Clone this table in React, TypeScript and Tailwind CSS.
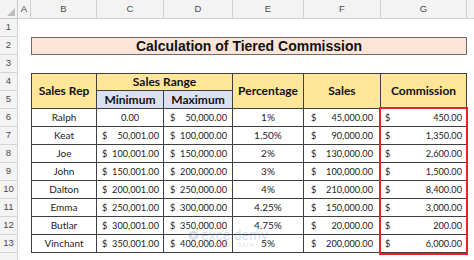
import type { FunctionComponent } from "react";

type Row = {
  name: string;
  min: string | null;
  max: string;
  pct: string;
  sales: string;
  commission: string;
};

const rows: Row[] = [
  { name: "Ralph", min: null, max: "50,000.00", pct: "1%", sales: "45,000.00", commission: "450.00" },
  { name: "Keat", min: "50,001.00", max: "100,000.00", pct: "1.50%", sales: "90,000.00", commission: "1,350.00" },
  { name: "Joe", min: "100,001.00", max: "150,000.00", pct: "2%", sales: "130,000.00", commission: "2,600.00" },
  { name: "John", min: "150,001.00", max: "200,000.00", pct: "3%", sales: "100,000.00", commission: "1,500.00" },
  { name: "Dalton", min: "200,001.00", max: "250,000.00", pct: "4%", sales: "210,000.00", commission: "8,400.00" },
  { name: "Emma", min: "250,001.00", max: "300,000.00", pct: "4.25%", sales: "150,000.00", commission: "3,000.00" },
  { name: "Butlar", min: "300,001.00", max: "350,000.00", pct: "4.75%", sales: "20,000.00", commission: "200.00" },
  { name: "Vinchant", min: "350,001.00", max: "400,000.00", pct: "5%", sales: "200,000.00", commission: "6,000.00" },
];

const letters = ["A", "B", "C", "D", "E", "F", "G"];

const rowNum = "flex items-center justify-center bg-[#f3f3f3] border-r border-b border-[#d4d4d4] text-[9.5px] text-[#4a4a4a] font-['Liberation_Sans',sans-serif]";
const cell = "border-r border-b border-[#3f3f3f] flex items-center";
const head = "bg-[#ffe699] font-bold text-[12px] text-[#111] justify-center";
const money = "justify-between text-[9.2px]";

const Money: FunctionComponent<{ value: string; className?: string }> = ({ value, className }) => (
  <div className={`${cell} ${money} ${className ?? "pl-[5px] pr-[4px]"}`}>
    <span>$</span>
    <span>{value}</span>
  </div>
);

const App: FunctionComponent = () => {
  return (
    <div className="relative w-[474px] h-[260px] overflow-hidden bg-white font-['Lato',sans-serif] text-[10px] text-[#222]">
      <div className="grid grid-cols-[18px_13px_66px_67px_69px_71px_77px_86px_1fr] grid-rows-[19px_repeat(13,18px)_1fr] h-full">
        {/* Column header strip */}
        <div className="relative bg-[#f3f3f3] border-r border-b border-[#c9c9c9]">
          <div className="absolute right-[2px] bottom-[2px] w-0 h-0 border-l-[8px] border-l-transparent border-b-[8px] border-b-[#bdbdbd]" />
        </div>
        {letters.map((l) => (
          <div
            key={l}
            className="flex items-center justify-center bg-[#f3f3f3] border-r border-b border-[#d0d0d0] text-[9.5px] text-[#4a4a4a] font-['Liberation_Sans',sans-serif]"
          >
            {l}
          </div>
        ))}
        <div className="bg-[#f3f3f3] border-b border-[#d0d0d0]" />

        {/* Row 1 */}
        <div className={rowNum}>1</div>
        <div className="col-span-8" />

        {/* Row 2: title */}
        <div className={rowNum}>2</div>
        <div />
        <div className="col-span-6 flex items-center justify-center bg-[#fce4d6] border border-[#6b6b6b] font-['Liberation_Sans',sans-serif] font-bold text-[14px] text-[#111]">
          Calculation of Tiered Commission
        </div>
        <div />

        {/* Row 3 */}
        <div className={rowNum}>3</div>
        <div className="col-span-8" />

        {/* Row 4 */}
        <div className={rowNum}>4</div>
        <div />
        <div className={`${cell} ${head} row-span-2 border-l border-t`}>Sales Rep</div>
        <div className={`${cell} ${head} col-span-2 border-t`}>Sales Range</div>
        <div className={`${cell} ${head} row-span-2 border-t`}>Percentage</div>
        <div className={`${cell} ${head} row-span-2 border-t`}>Sales</div>
        <div className={`${cell} ${head} row-span-2 border-t`}>Commission</div>
        <div />

        {/* Row 5 */}
        <div className={rowNum}>5</div>
        <div />
        <div className={`${cell} bg-[#d9e1f2] font-bold text-[12px] text-[#111] justify-center`}>Minimum</div>
        <div className={`${cell} bg-[#d9e1f2] font-bold text-[12px] text-[#111] justify-center`}>Maximum</div>
        <div />

        {/* Data rows */}
        {rows.map((r, i) => (
          <div key={r.name} className="contents">
            <div className={rowNum}>{i + 6}</div>
            <div />
            <div className={`${cell} border-l justify-center`}>{r.name}</div>
            {r.min === null ? (
              <div className={`${cell} justify-center text-[9.2px]`}>0.00</div>
            ) : (
              <Money value={r.min} />
            )}
            <Money value={r.max} className="pl-[6px] pr-[5px]" />
            <div className={`${cell} justify-center`}>{r.pct}</div>
            <Money value={r.sales} className="pl-[7px] pr-[7px]" />
            <Money value={r.commission} className="pl-[4px] pr-[4px]" />
            <div />
          </div>
        ))}

        {/* Row 14 (partial) */}
        <div className="bg-[#f3f3f3] border-r border-[#d4d4d4]" />
        <div className="col-span-8" />
      </div>

      {/* Red highlight around the Commission results */}
      <div className="absolute left-[379px] top-[107px] w-[89px] h-[148px] border-2 border-[#e3242b] pointer-events-none" />

      {/* Watermark */}
      <div className="absolute left-[188px] top-[228px] flex flex-col items-end opacity-25 pointer-events-none text-[#5b7bb8]">
        <div className="flex items-center gap-[2px]">
          <svg width="11" height="11" viewBox="0 0 12 12">
            <path d="M6 0.5 L11 3.2 V8.8 L6 11.5 L1 8.8 V3.2 Z" fill="#5b7bb8" />
            <path d="M4 4 L8 8 M8 4 L4 8" stroke="#fff" strokeWidth="1.3" />
          </svg>
          <span className="font-['Liberation_Sans',sans-serif] text-[14px] leading-[14px]">exceldemy</span>
        </div>
        <span className="font-['Liberation_Sans',sans-serif] text-[5px] tracking-[1px] leading-[6px]">EXCEL · DATA · BI</span>
      </div>
    </div>
  );
};

export default App;
